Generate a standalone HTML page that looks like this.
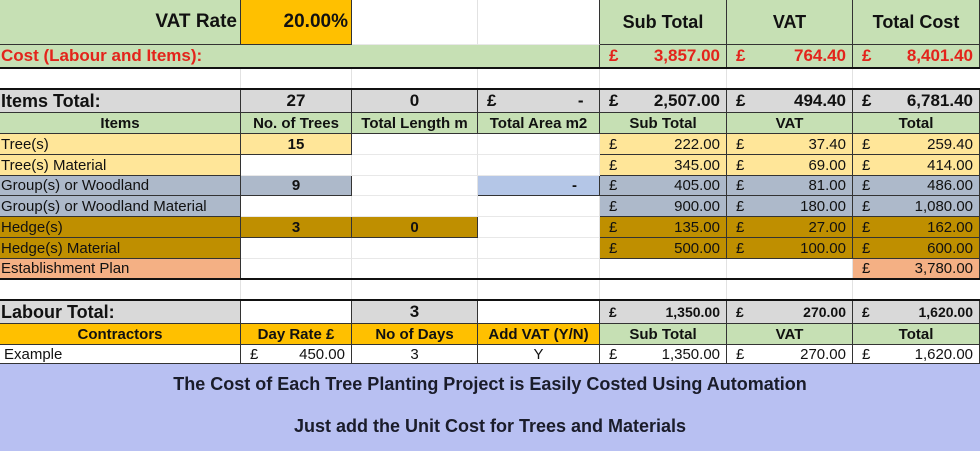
<!DOCTYPE html>
<html><head><meta charset="utf-8"><style>
body{margin:0;width:980px;height:451px;overflow:hidden;background:#fff;position:relative;font-family:"Liberation Sans",Arial,sans-serif;color:#111}
.c{position:absolute;box-sizing:border-box;display:flex;align-items:center;white-space:nowrap;overflow:hidden;font-size:15px;padding:0 3px;border-right:1px solid #e2e2e2;border-bottom:1px solid #e8e8e8}
.d{border-right:1px solid #333;border-bottom:1px solid #333}
.b{font-weight:bold}
.ctr{justify-content:center}
.r{justify-content:flex-end;padding-right:6px}
.m{justify-content:space-between;padding:0 6px 0 9px}
.g{background:#c6e0b4}.o{background:#ffc000}.y{background:#ffe699}.s{background:#adb9ca}.lb{background:#b4c6e7}.h{background:#bf8f00}.p{background:#f4b084}.gr{background:#d9d9d9}
.red{color:#e3241b}
.line{position:absolute;left:0;width:980px;height:2px;background:#111}
</style></head><body>
<!-- Row1 -->
<div class="c d g b r" style="left:0;top:0;width:241px;height:45px;font-size:19px;padding-right:3px">VAT Rate</div>
<div class="c d o b r" style="left:241px;top:0;width:111px;height:45px;font-size:19px;padding-right:3px">20.00%</div>
<div class="c" style="left:352px;top:0;width:126px;height:45px"></div>
<div class="c" style="left:478px;top:0;width:122px;height:45px;border-right:1px solid #333"></div>
<div class="c d g b ctr" style="left:600px;top:0;width:127px;height:45px;font-size:18px">Sub Total</div>
<div class="c d g b ctr" style="left:727px;top:0;width:126px;height:45px;font-size:18px">VAT</div>
<div class="c d g b ctr" style="left:853px;top:0;width:127px;height:45px;font-size:18px">Total Cost</div>
<!-- Row2 -->
<div class="c d g b red" style="left:0;top:45px;width:600px;height:23px;font-size:17px;padding-left:1px">Cost (Labour and Items):</div>
<div class="c d g b red m" style="left:600px;top:45px;width:127px;height:23px;font-size:17px"><span>£</span><span>3,857.00</span></div>
<div class="c d g b red m" style="left:727px;top:45px;width:126px;height:23px;font-size:17px"><span>£</span><span>764.40</span></div>
<div class="c d g b red m" style="left:853px;top:45px;width:127px;height:23px;font-size:17px"><span>£</span><span>8,401.40</span></div>
<div class="line" style="top:67px"></div>
<!-- Row3 -->
<div class="c" style="left:0;top:69px;width:241px;height:20px"></div><div class="c" style="left:241px;top:69px;width:111px;height:20px"></div><div class="c" style="left:352px;top:69px;width:126px;height:20px"></div><div class="c" style="left:478px;top:69px;width:122px;height:20px"></div><div class="c" style="left:600px;top:69px;width:127px;height:20px"></div><div class="c" style="left:727px;top:69px;width:126px;height:20px"></div>
<div class="line" style="top:88px"></div>
<!-- Row4 -->
<div class="c d gr b" style="left:0;top:90px;width:241px;height:23px;font-size:18px;padding-left:1px">Items Total:</div>
<div class="c d gr b ctr" style="left:241px;top:90px;width:111px;height:23px;font-size:17px">27</div>
<div class="c d gr b ctr" style="left:352px;top:90px;width:126px;height:23px;font-size:17px">0</div>
<div class="c d gr b m" style="left:478px;top:90px;width:122px;height:23px;font-size:17px"><span>£</span><span>-&nbsp;&nbsp;</span></div>
<div class="c d gr b m" style="left:600px;top:90px;width:127px;height:23px;font-size:17px"><span>£</span><span>2,507.00</span></div>
<div class="c d gr b m" style="left:727px;top:90px;width:126px;height:23px;font-size:17px"><span>£</span><span>494.40</span></div>
<div class="c d gr b m" style="left:853px;top:90px;width:127px;height:23px;font-size:17px"><span>£</span><span>6,781.40</span></div>
<!-- Row5 -->
<div class="c d g b ctr" style="left:0;top:113px;width:241px;height:21px">Items</div>
<div class="c d g b ctr" style="left:241px;top:113px;width:111px;height:21px">No. of Trees</div>
<div class="c d g b ctr" style="left:352px;top:113px;width:126px;height:21px">Total Length m</div>
<div class="c d g b ctr" style="left:478px;top:113px;width:122px;height:21px">Total Area m2</div>
<div class="c d g b ctr" style="left:600px;top:113px;width:127px;height:21px">Sub Total</div>
<div class="c d g b ctr" style="left:727px;top:113px;width:126px;height:21px">VAT</div>
<div class="c d g b ctr" style="left:853px;top:113px;width:127px;height:21px">Total</div>
<!-- Tree(s) -->
<div class="c d y" style="left:0;top:134px;width:241px;height:21px;padding-left:1px">Tree(s)</div>
<div class="c d y b ctr" style="left:241px;top:134px;width:111px;height:21px">15</div>
<div class="c" style="left:352px;top:134px;width:126px;height:21px"></div><div class="c" style="left:478px;top:134px;width:122px;height:21px"></div>
<div class="c d y m" style="left:600px;top:134px;width:127px;height:21px"><span>£</span><span>222.00</span></div>
<div class="c d y m" style="left:727px;top:134px;width:126px;height:21px"><span>£</span><span>37.40</span></div>
<div class="c d y m" style="left:853px;top:134px;width:127px;height:21px"><span>£</span><span>259.40</span></div>
<!-- Tree material -->
<div class="c d y" style="left:0;top:155px;width:241px;height:21px;padding-left:1px">Tree(s) Material</div>
<div class="c" style="left:241px;top:155px;width:111px;height:21px"></div><div class="c" style="left:352px;top:155px;width:126px;height:21px"></div><div class="c" style="left:478px;top:155px;width:122px;height:21px"></div>
<div class="c d y m" style="left:600px;top:155px;width:127px;height:21px"><span>£</span><span>345.00</span></div>
<div class="c d y m" style="left:727px;top:155px;width:126px;height:21px"><span>£</span><span>69.00</span></div>
<div class="c d y m" style="left:853px;top:155px;width:127px;height:21px"><span>£</span><span>414.00</span></div>
<!-- Group -->
<div class="c d s" style="left:0;top:176px;width:241px;height:20px;padding-left:1px">Group(s) or Woodland</div>
<div class="c d s b ctr" style="left:241px;top:176px;width:111px;height:20px">9</div>
<div class="c" style="left:352px;top:176px;width:126px;height:20px"></div>
<div class="c d lb b r" style="left:478px;top:176px;width:122px;height:20px;padding-right:22px">-</div>
<div class="c d s m" style="left:600px;top:176px;width:127px;height:20px"><span>£</span><span>405.00</span></div>
<div class="c d s m" style="left:727px;top:176px;width:126px;height:20px"><span>£</span><span>81.00</span></div>
<div class="c d s m" style="left:853px;top:176px;width:127px;height:20px"><span>£</span><span>486.00</span></div>
<!-- Group material -->
<div class="c d s" style="left:0;top:196px;width:241px;height:21px;padding-left:1px">Group(s) or Woodland Material</div>
<div class="c" style="left:241px;top:196px;width:111px;height:21px"></div><div class="c" style="left:352px;top:196px;width:126px;height:21px"></div><div class="c" style="left:478px;top:196px;width:122px;height:21px"></div>
<div class="c d s m" style="left:600px;top:196px;width:127px;height:21px"><span>£</span><span>900.00</span></div>
<div class="c d s m" style="left:727px;top:196px;width:126px;height:21px"><span>£</span><span>180.00</span></div>
<div class="c d s m" style="left:853px;top:196px;width:127px;height:21px"><span>£</span><span>1,080.00</span></div>
<!-- Hedge -->
<div class="c d h" style="left:0;top:217px;width:241px;height:21px;padding-left:1px">Hedge(s)</div>
<div class="c d h b ctr" style="left:241px;top:217px;width:111px;height:21px">3</div>
<div class="c d h b ctr" style="left:352px;top:217px;width:126px;height:21px">0</div>
<div class="c" style="left:478px;top:217px;width:122px;height:21px"></div>
<div class="c d h m" style="left:600px;top:217px;width:127px;height:21px"><span>£</span><span>135.00</span></div>
<div class="c d h m" style="left:727px;top:217px;width:126px;height:21px"><span>£</span><span>27.00</span></div>
<div class="c d h m" style="left:853px;top:217px;width:127px;height:21px"><span>£</span><span>162.00</span></div>
<!-- Hedge material -->
<div class="c d h" style="left:0;top:238px;width:241px;height:21px;padding-left:1px">Hedge(s) Material</div>
<div class="c" style="left:241px;top:238px;width:111px;height:21px"></div><div class="c" style="left:352px;top:238px;width:126px;height:21px"></div><div class="c" style="left:478px;top:238px;width:122px;height:21px"></div>
<div class="c d h m" style="left:600px;top:238px;width:127px;height:21px"><span>£</span><span>500.00</span></div>
<div class="c d h m" style="left:727px;top:238px;width:126px;height:21px"><span>£</span><span>100.00</span></div>
<div class="c d h m" style="left:853px;top:238px;width:127px;height:21px"><span>£</span><span>600.00</span></div>
<!-- Establishment -->
<div class="c d p" style="left:0;top:259px;width:241px;height:20px;padding-left:1px">Establishment Plan</div>
<div class="c" style="left:241px;top:259px;width:111px;height:20px"></div><div class="c" style="left:352px;top:259px;width:126px;height:20px"></div><div class="c" style="left:478px;top:259px;width:122px;height:20px"></div><div class="c" style="left:600px;top:259px;width:127px;height:20px"></div><div class="c" style="left:727px;top:259px;width:126px;height:20px"></div>
<div class="c d p m" style="left:853px;top:259px;width:127px;height:20px"><span>£</span><span>3,780.00</span></div>
<div class="line" style="top:278px"></div>
<!-- blank -->
<div class="c" style="left:0;top:280px;width:241px;height:20px"></div><div class="c" style="left:241px;top:280px;width:111px;height:20px"></div><div class="c" style="left:352px;top:280px;width:126px;height:20px"></div><div class="c" style="left:478px;top:280px;width:122px;height:20px"></div><div class="c" style="left:600px;top:280px;width:127px;height:20px"></div><div class="c" style="left:727px;top:280px;width:126px;height:20px"></div>
<div class="line" style="top:299px"></div>
<!-- Labour -->
<div class="c d gr b" style="left:0;top:301px;width:241px;height:23px;font-size:18px;padding-left:1px">Labour Total:</div>
<div class="c d" style="left:241px;top:301px;width:111px;height:23px"></div>
<div class="c d gr b ctr" style="left:352px;top:301px;width:126px;height:23px;font-size:17px">3</div>
<div class="c d" style="left:478px;top:301px;width:122px;height:23px"></div>
<div class="c d gr b m" style="left:600px;top:301px;width:127px;height:23px;font-size:14px"><span>£</span><span>1,350.00</span></div>
<div class="c d gr b m" style="left:727px;top:301px;width:126px;height:23px;font-size:14px"><span>£</span><span>270.00</span></div>
<div class="c d gr b m" style="left:853px;top:301px;width:127px;height:23px;font-size:14px"><span>£</span><span>1,620.00</span></div>
<!-- Contractors -->
<div class="c d o b ctr" style="left:0;top:324px;width:241px;height:21px">Contractors</div>
<div class="c d o b ctr" style="left:241px;top:324px;width:111px;height:21px">Day Rate £</div>
<div class="c d o b ctr" style="left:352px;top:324px;width:126px;height:21px">No of Days</div>
<div class="c d o b ctr" style="left:478px;top:324px;width:122px;height:21px">Add VAT (Y/N)</div>
<div class="c d g b ctr" style="left:600px;top:324px;width:127px;height:21px">Sub Total</div>
<div class="c d g b ctr" style="left:727px;top:324px;width:126px;height:21px">VAT</div>
<div class="c d g b ctr" style="left:853px;top:324px;width:127px;height:21px">Total</div>
<!-- Example -->
<div class="c d" style="left:0;top:345px;width:241px;height:19px;padding-left:4px">Example</div>
<div class="c d m" style="left:241px;top:345px;width:111px;height:19px"><span>£</span><span>450.00</span></div>
<div class="c d ctr" style="left:352px;top:345px;width:126px;height:19px">3</div>
<div class="c d ctr" style="left:478px;top:345px;width:122px;height:19px">Y</div>
<div class="c d m" style="left:600px;top:345px;width:127px;height:19px"><span>£</span><span>1,350.00</span></div>
<div class="c d m" style="left:727px;top:345px;width:126px;height:19px"><span>£</span><span>270.00</span></div>
<div class="c d m" style="left:853px;top:345px;width:127px;height:19px"><span>£</span><span>1,620.00</span></div>
<!-- Banner -->
<div style="position:absolute;left:0;top:364px;width:980px;height:87px;background:#b8c0f2;color:#1a1c2a;font-weight:bold;font-size:18px;text-align:center">
<div style="position:absolute;top:10px;width:100%">The Cost of Each Tree Planting Project is Easily Costed Using Automation</div>
<div style="position:absolute;top:52px;width:100%">Just add the Unit Cost for Trees and Materials</div>
</div>
</body></html>
